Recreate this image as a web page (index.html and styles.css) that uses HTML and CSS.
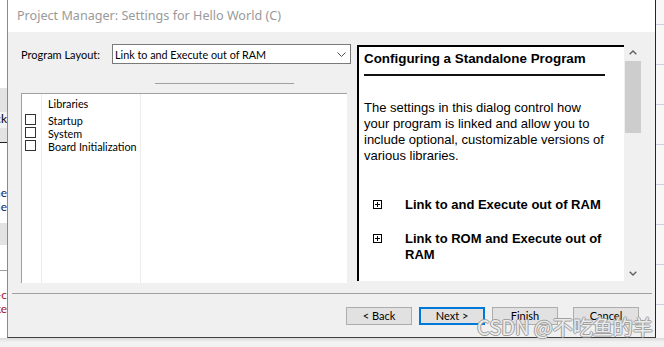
FILE: index.html
```html
<!DOCTYPE html>
<html>
    <head>
        <meta charset="UTF-8">
        <title>Project Manager: Settings for Hello World (C)</title>
        <link rel="stylesheet" href="styles.css">
    </head>
    <body>
        <div class="screen">
            <div class="desk">
                <!-- bits of the IDE window behind the dialog -->
                <div class="behind-left">
                    <div class="bl bl-white" style="height: 88px"></div>
                    <div class="bl bl-grey" style="height: 24px"></div>
                    <div class="bl bl-btn" style="height: 16px"><span>Back</span></div>
                    <div class="bl bl-grey" style="height: 14px"></div>
                    <div class="bl bl-dark" style="height: 1px"></div>
                    <div class="bl bl-white" style="height: 43px"></div>
                    <div class="bl bl-text" style="height: 14px"><span>Name</span></div>
                    <div class="bl bl-text" style="height: 14px"><span>Handle</span></div>
                    <div class="bl bl-white" style="height: 9px"></div>
                    <div class="bl bl-grey" style="height: 22px"></div>
                    <div class="bl bl-white" style="height: 25px"></div>
                    <div class="bl bl-line" style="height: 1px"></div>
                    <div class="bl bl-white" style="height: 17px"></div>
                    <div class="bl bl-red" style="height: 14px"><span>arm-c</span></div>
                    <div class="bl bl-red" style="height: 14px"><span>make</span></div>
                    <div class="bl bl-white" style="height: 30px"></div>
                </div>

                <div class="dialog">
                    <div class="titlebar">Project Manager: Settings for Hello World (C)</div>
                    <div class="dialog-body">
                        <div class="main">
                            <div class="settings">
                                <div class="layout-row">
                                    <label class="layout-label">Program Layout:</label>
                                    <div class="select">
                                        <span>Link to and Execute out of RAM</span>
                                        <svg width="9" height="5" viewBox="0 0 9 5"><path d="M.5.5l4 4 4-4" fill="none" stroke="#505050"/></svg>
                                    </div>
                                </div>
                                <div class="divider"></div>
                                <div class="lib-list">
                                    <div class="col col-check">
                                        <div class="check"></div>
                                        <div class="check"></div>
                                        <div class="check"></div>
                                    </div>
                                    <div class="col col-name">
                                        <div class="lib-head">Libraries</div>
                                        <div class="lib-row">Startup</div>
                                        <div class="lib-row">System</div>
                                        <div class="lib-row">Board Initialization</div>
                                    </div>
                                    <div class="col col-rest"></div>
                                </div>
                            </div>

                            <div class="help">
                                <div class="help-page">
                                    <div class="help-title">Configuring a Standalone Program</div>
                                    <div class="help-rule"></div>
                                    <p class="help-text">The settings in this dialog control how your program is linked and allow you to include optional, customizable versions of various libraries.</p>
                                    <div class="help-item">
                                        <svg class="plus" width="9" height="9" viewBox="0 0 9 9"><rect x=".5" y=".5" width="8" height="8" fill="none" stroke="#000"/><path d="M2 4.5h5M4.5 2v5" stroke="#000"/></svg>
                                        <span>Link to and Execute out of RAM</span>
                                    </div>
                                    <div class="help-item">
                                        <svg class="plus" width="9" height="9" viewBox="0 0 9 9"><rect x=".5" y=".5" width="8" height="8" fill="none" stroke="#000"/><path d="M2 4.5h5M4.5 2v5" stroke="#000"/></svg>
                                        <span>Link to ROM and Execute out of RAM</span>
                                    </div>
                                </div>
                                <div class="scrollbar">
                                    <div class="sb-up">
                                        <svg width="8" height="5" viewBox="0 0 8 5"><path d="M.7 4.3L4 1l3.3 3.3" fill="none" stroke="#606060" stroke-width="1.4"/></svg>
                                    </div>
                                    <div class="sb-thumb"></div>
                                    <div class="sb-track"></div>
                                    <div class="sb-down">
                                        <svg width="8" height="5" viewBox="0 0 8 5"><path d="M.7.7L4 4l3.3-3.3" fill="none" stroke="#606060" stroke-width="1.4"/></svg>
                                    </div>
                                </div>
                            </div>
                        </div>

                        <div class="footer-rule"></div>

                        <div class="buttons">
                            <button class="button">&lt; Back</button>
                            <button class="button button-default">Next &gt;</button>
                            <button class="button">Finish</button>
                            <button class="button button-cancel">Cancel</button>
                        </div>
                    </div>
                </div>

                <div class="behind-right"></div>
            </div>
            <div class="desk-bottom"></div>

            <div class="watermark">CSDN @不吃鱼的羊</div>
        </div>
    </body>
</html>
```

FILE: styles.css
```css
html, body {
    margin: 0;
    padding: 0;
    font-family: Lato, "Noto Sans", sans-serif;
}
.screen {
    position: relative;
    width: 664px;
    height: 347px;
    overflow: hidden;
    background: #ececec;
}
.desk {
    display: flex;
    height: 338px;
}

/* window behind */
.behind-left {
    width: 7px;
    display: flex;
    flex-direction: column;
    overflow: hidden;
    font-size: 12px;
    line-height: 14px;
}
.bl {
    display: flex;
    justify-content: flex-end;
    white-space: nowrap;
    flex-shrink: 0;
}
.bl-white { background: #fff; }
.bl-grey { background: #e3e3e3; }
.bl-btn { background: #f3f3f3; color: #000; }
.bl-dark { background: #222; }
.bl-line { background: #a0a0a0; }
.bl-text { background: #fff; color: #1b1b5a; }
.bl-red { background: #fff; color: #a31515; }
.behind-right {
    width: 8px;
    background: repeating-linear-gradient(to bottom,
        #f7f7f7 0, #f7f7f7 24px,
        #c9cee0 24px, #c9cee0 25px,
        #f7f7f7 25px, #f7f7f7 40px);
}
.desk-bottom {
    height: 9px;
    background: linear-gradient(to bottom, #d8d8d8, #f2f2f2 4px);
}

/* dialog */
.dialog {
    width: 647px;
    border-left: 1px solid #8a8a8a;
    border-right: 1px solid #262626;
    border-bottom: 1px solid #404040;
    display: flex;
    flex-direction: column;
}
.titlebar {
    height: 32px;
    flex-shrink: 0;
    background: #fff;
    color: #9a9a9a;
    font-family: "Noto Sans", sans-serif;
    font-size: 12.6px;
    line-height: 32px;
    padding-left: 9px;
    box-sizing: border-box;
    white-space: nowrap;
}
.dialog-body {
    flex: 1;
    background: #f0f0f0;
    display: flex;
    flex-direction: column;
}
.main {
    display: flex;
    align-items: flex-start;
    padding: 12px 0 0 13px;
}
.settings {
    width: 330px;
}
.layout-row {
    display: flex;
    align-items: center;
    height: 20px;
    font-size: 11px;
    color: #000;
}
.layout-label {
    width: 91px;
}
.select {
    width: 239px;
    height: 20px;
    box-sizing: border-box;
    border: 1px solid #7a7a7a;
    background: #fff;
    display: flex;
    align-items: center;
    justify-content: space-between;
    padding: 0 4px 0 2px;
    font-size: 10.8px;
}
.divider {
    margin: 19px 0 0 134px;
    width: 139px;
    height: 1px;
    background: #a0a0a0;
}
.lib-list {
    margin-top: 9px;
    width: 326px;
    height: 190px;
    box-sizing: border-box;
    border-left: 1px solid #a0a0a0;
    border-top: 1px solid #a0a0a0;
    background: #fff;
    display: flex;
    font-size: 10.8px;
    color: #000;
}
.col {
    border-right: 1px solid #ececec;
}
.col-check {
    width: 20px;
    padding: 20px 0 0 3px;
    box-sizing: border-box;
}
.check {
    width: 11px;
    height: 11px;
    box-sizing: border-box;
    border: 1px solid #333;
    margin-bottom: 2px;
}
.col-name {
    width: 99px;
    padding-left: 6px;
    box-sizing: border-box;
}
.lib-head {
    padding-top: 3px;
    line-height: 13px;
    margin-bottom: 4px;
}
.lib-row {
    line-height: 13px;
    white-space: nowrap;
}
.col-rest {
    flex: 1;
    border-right: none;
}

/* help pane */
.help {
    display: flex;
    margin: 1px 0 0 6px;
    height: 236px;
}
.help-page {
    width: 267px;
    box-sizing: border-box;
    border-left: 2px solid #000;
    border-top: 2px solid #000;
    background: #fff;
    padding: 4px 17px 0 5px;
    font-family: "Liberation Sans", Arial, sans-serif;
    font-size: 13px;
    line-height: 16px;
    color: #000;
}
.help-title {
    font-weight: bold;
    font-size: 13.4px;
}
.help-rule {
    width: 241px;
    height: 2px;
    background: #111;
    margin-top: 7px;
}
.help-text {
    margin: 24px 0 0 0;
}
.help-item {
    display: flex;
    align-items: flex-start;
    font-weight: bold;
    margin-top: 33px;
}
.help-item + .help-item {
    margin-top: 18px;
}
.help-item .plus {
    flex-shrink: 0;
    margin: 3px 23px 0 9px;
}
.scrollbar {
    width: 17px;
    display: flex;
    flex-direction: column;
}
.sb-up {
    height: 16px;
    display: flex;
    justify-content: center;
    padding-top: 5px;
    box-sizing: border-box;
}
.sb-thumb {
    height: 72px;
    margin-left: 1px;
    background: #cdcdcd;
}
.sb-track {
    flex: 1;
}
.sb-down {
    height: 16px;
    display: flex;
    justify-content: center;
    padding-top: 6px;
    box-sizing: border-box;
}

/* footer */
.footer-rule {
    margin: 10px 3px 0 4px;
    height: 1px;
    background: #a0a0a0;
}
.buttons {
    display: flex;
    justify-content: flex-end;
    margin-top: 13px;
    padding-right: 16px;
}
.button {
    width: 66px;
    height: 18px;
    box-sizing: border-box;
    margin: 0 0 0 7px;
    padding: 0;
    border: 1px solid #adadad;
    background: #e1e1e1;
    font-family: Lato, "Noto Sans", sans-serif;
    font-size: 11px;
    line-height: 14px;
    color: #000;
}
.button-default {
    border: 2px solid #0078d7;
}
.button-cancel {
    margin-left: 15px;
}

.watermark {
    position: absolute;
    left: 477px;
    top: 315px;
    font-family: "Noto Sans CJK SC", sans-serif;
    font-size: 20px;
    line-height: 24px;
    color: rgba(250, 250, 250, 0.85);
    text-shadow: 1px 0 0 #a0a0a0, -1px 0 0 #a0a0a0, 0 1px 0 #a0a0a0, 0 -1px 0 #a0a0a0;
    white-space: nowrap;
}
```
